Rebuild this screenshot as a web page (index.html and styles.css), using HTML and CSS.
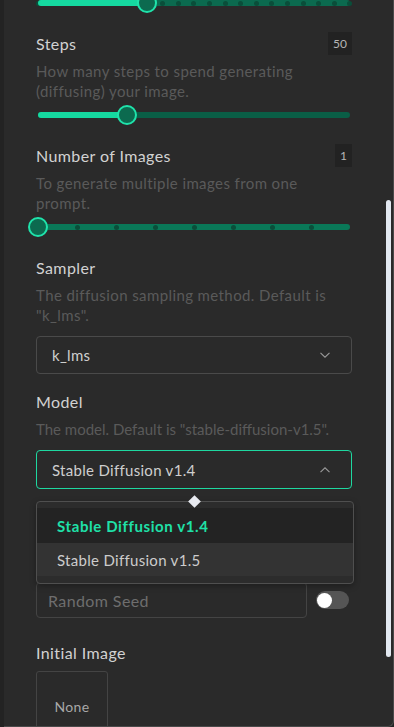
FILE: index.html
```html
<!DOCTYPE html>
<html>
<head>
  <meta charset="UTF-8">
  <link rel="stylesheet" href="styles.css">
</head>
<body>
  <div class="panel">
    <div class="settings">
      <!-- previous slider, scrolled mostly out of view -->
      <div class="slider slider-top">
        <div class="track">
          <div class="dots dots-20">
            <span></span><span></span><span></span><span></span><span></span><span></span><span></span>
            <span></span><span></span><span></span><span></span><span></span><span></span><span></span>
            <span></span><span></span><span></span><span></span><span></span><span></span><span></span>
          </div>
          <div class="fill" style="width: 35%"></div>
        </div>
        <div class="thumb" style="left: 35%"></div>
      </div>

      <div class="field">
        <div class="field-header">
          <span class="field-label">Steps</span>
          <span class="badge">50</span>
        </div>
        <div class="field-desc">How many steps to spend generating (diffusing) your image.</div>
        <div class="slider">
          <div class="track track-dark">
            <div class="fill" style="width: 28.5%"></div>
          </div>
          <div class="thumb" style="left: 28.5%"></div>
        </div>
      </div>

      <div class="field">
        <div class="field-header">
          <span class="field-label">Number of Images</span>
          <span class="badge">1</span>
        </div>
        <div class="field-desc">To generate multiple images from one prompt.</div>
        <div class="slider">
          <div class="track track-light">
            <div class="dots dots-8">
              <span class="hide"></span><span></span><span></span><span></span><span></span>
              <span></span><span></span><span></span><span class="hide"></span>
            </div>
          </div>
          <div class="thumb" style="left: 0%"></div>
        </div>
      </div>

      <div class="field">
        <div class="field-header">
          <span class="field-label">Sampler</span>
        </div>
        <div class="field-desc">The diffusion sampling method. Default is "k_lms".</div>
        <div class="select">
          <span>k_lms</span>
          <svg class="chevron" width="12" height="8" viewBox="0 0 12 8">
            <path d="M1.5 1.8 L6 6.2 L10.5 1.8" fill="none" stroke="#9a9a9a" stroke-width="1.1"/>
          </svg>
        </div>
      </div>

      <div class="field field-after-select">
        <div class="field-header">
          <span class="field-label">Model</span>
        </div>
        <div class="field-desc field-desc-nowrap">The model. Default is "stable-diffusion-v1.5".</div>
        <div class="select-wrap">
          <div class="select select-open">
            <span>Stable Diffusion v1.4</span>
            <svg class="chevron" width="12" height="8" viewBox="0 0 12 8">
              <path d="M1.5 6.2 L6 1.8 L10.5 6.2" fill="none" stroke="#9a9a9a" stroke-width="1.1"/>
            </svg>
          </div>
          <div class="menu">
            <div class="menu-arrow"></div>
            <div class="menu-item menu-item-selected">Stable Diffusion v1.4</div>
            <div class="menu-item menu-item-hover">Stable Diffusion v1.5</div>
          </div>
        </div>
      </div>

      <!-- seed field; its label and text sit under the open menu -->
      <div class="field field-after-select">
        <div class="field-header field-hidden">
          <span class="field-label">Seed</span>
        </div>
        <div class="field-desc field-hidden">The seed used for generating. Leave it empty for a random one.</div>
        <div class="seed-row">
          <div class="input">Random Seed</div>
          <div class="toggle"><span class="knob"></span></div>
        </div>
      </div>

      <div class="field field-after-input">
        <div class="field-header">
          <span class="field-label">Initial Image</span>
        </div>
        <div class="image-box">None</div>
      </div>
    </div>

    <div class="scrollbar"></div>
  </div>
</body>
</html>
```

FILE: styles.css
```css
body {
  margin: 0;
  padding: 0;
  background-color: #232323;
  font-family: Lato, "Open Sans", sans-serif;
  overflow: hidden;
}
.panel {
  position: relative;
  margin-left: 4px;
  height: 726px;
  background-color: #2a2a2a;
  border-right: 1px solid #4a4a4a;
  border-bottom: 1px solid #4a4a4a;
  border-bottom-right-radius: 6px;
  overflow: hidden;
}
.settings {
  padding: 0 41px 0 32px;
  margin-top: -7px;
}
.scrollbar {
  position: absolute;
  top: 200px;
  left: 382px;
  width: 5px;
  height: 457px;
  border-radius: 3px;
  background-color: #e2e8f0;
}
/* fields */
.field {
  margin-top: 18px;
}
.field-after-select {
  margin-top: 15px;
}
.field-after-input {
  margin-top: 22px;
}
.field-hidden {
  visibility: hidden;
}
.field-header {
  display: flex;
  justify-content: space-between;
  align-items: center;
  height: 24px;
}
.field-label {
  color: #d2d2d2;
  font-size: 16px;
  letter-spacing: 0.4px;
}
.badge {
  background-color: #222222;
  color: #b5b5b5;
  font-size: 12px;
  height: 23px;
  min-width: 15px;
  padding: 0 5px;
  box-sizing: border-box;
  display: flex;
  align-items: center;
  justify-content: center;
}
.field-desc {
  margin-top: 6px;
  padding-right: 8px;
  color: #5a5a5a;
  font-size: 15px;
  line-height: 20px;
  letter-spacing: 0.4px;
}
.field-desc-nowrap {
  white-space: nowrap;
  letter-spacing: 0;
  padding-right: 0;
}
/* sliders */
.slider {
  position: relative;
  height: 20px;
  margin: 4px 2px 0 2px;
  display: flex;
  align-items: center;
}
.slider-top {
  margin-top: 0;
}
.track {
  position: relative;
  width: 100%;
  height: 6px;
  border-radius: 3px;
  background-color: #0b6a4f;
}
.track-dark {
  background-color: #0a5e46;
}
.track-light {
  background-color: #0a7858;
}
.fill {
  position: absolute;
  left: 0;
  top: 0;
  bottom: 0;
  border-radius: 3px;
  background-color: #15d9a0;
}
.dots {
  position: absolute;
  inset: 0;
  display: flex;
  justify-content: space-between;
  align-items: center;
}
.dots span {
  width: 5px;
  height: 5px;
  margin: 0 -2.5px;
  border-radius: 50%;
  background-color: #0a4e3a;
}
.dots span.hide {
  visibility: hidden;
}
.thumb {
  position: absolute;
  top: 0;
  width: 20px;
  height: 20px;
  margin-left: -10px;
  box-sizing: border-box;
  border: 2px solid #1fe3ab;
  border-radius: 50%;
  background-color: #0c6a4f;
}
/* selects */
.select-wrap {
  position: relative;
}
.select {
  margin-top: 11px;
  height: 38px;
  box-sizing: border-box;
  border: 1px solid #4a4a4a;
  border-radius: 4px;
  padding: 0 20px 0 15px;
  display: flex;
  justify-content: space-between;
  align-items: center;
  color: #cfcfcf;
  font-size: 15px;
  letter-spacing: 0.3px;
}
.select-open {
  height: 39px;
  border-color: #1ed8a0;
}
.menu {
  position: absolute;
  top: 51px;
  left: 0;
  right: -2px;
  padding: 6px 0 7px 0;
  background-color: #2c2c2c;
  border: 1px solid #4f4f4f;
  border-radius: 4px;
  box-shadow: 0 2px 6px rgba(0, 0, 0, 0.3);
  z-index: 2;
}
.menu-arrow {
  position: absolute;
  top: -5px;
  left: 50%;
  width: 9px;
  height: 9px;
  margin-left: -5px;
  background-color: #e8eaf0;
  transform: rotate(45deg);
}
.menu-item {
  padding: 0 20px;
  height: 34px;
  display: flex;
  align-items: center;
  font-size: 15px;
  letter-spacing: 0.3px;
  color: #cccccc;
}
.menu-item-selected {
  background-color: #232323;
  color: #1fe0a8;
  font-weight: bold;
  letter-spacing: 0.6px;
  height: 35px;
}
.menu-item-hover {
  background-color: #333333;
  height: 33px;
}
/* seed */
.seed-row {
  margin-top: 8px;
  display: flex;
  align-items: center;
  gap: 9px;
}
.input {
  flex: 1;
  height: 36px;
  box-sizing: border-box;
  border: 1px solid #444444;
  border-radius: 4px;
  padding: 0 11px;
  display: flex;
  align-items: center;
  color: #6e6e6e;
  font-size: 16px;
  letter-spacing: 0.4px;
}
.toggle {
  width: 33px;
  height: 18px;
  margin-right: 3px;
  border-radius: 9px;
  background-color: #555555;
  display: flex;
  align-items: center;
  padding-left: 1px;
  box-sizing: border-box;
}
.knob {
  width: 15px;
  height: 15px;
  border-radius: 50%;
  background-color: #ffffff;
}
/* image */
.image-box {
  margin-top: 7px;
  width: 72px;
  height: 70px;
  box-sizing: border-box;
  border: 1px solid #444444;
  border-radius: 3px;
  display: flex;
  align-items: center;
  justify-content: center;
  color: #a8a8a8;
  font-size: 14px;
  letter-spacing: 0.3px;
}
```
